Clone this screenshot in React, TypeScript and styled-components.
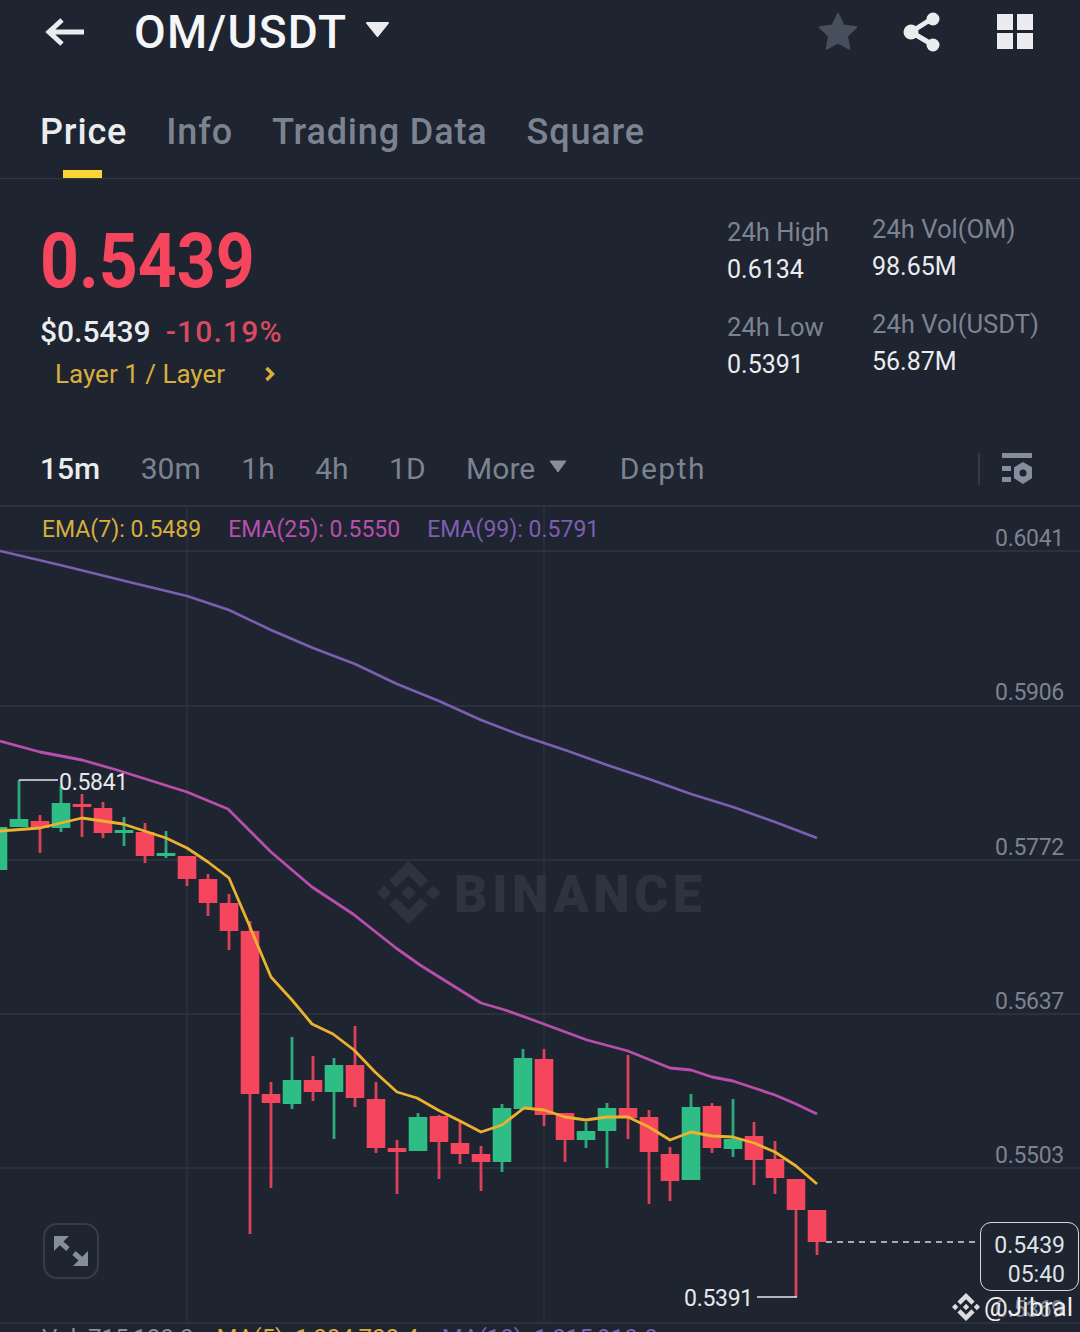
import React from 'react';
import styled, {createGlobalStyle} from "styled-components";

const GlobalStyle = createGlobalStyle`
    html, body {
        margin: 0;
        padding: 0;
        height: 1332px;
        overflow: hidden;
        background-color: #1e2430;
    }
    body {
        font-family: Roboto, "Noto Sans", sans-serif;
    }
`

type CandleType = [number, number, number, number, number, 'up' | 'down']

// x, wick top, wick bottom, body top, body bottom
const candles: Array<CandleType> = [
    [-2, 827, 870, 827, 870, 'up'],
    [19, 780, 827, 819, 827, 'up'],
    [40, 815, 853, 821, 828, 'down'],
    [61, 786, 832, 803, 828, 'up'],
    [82, 794, 837, 804, 807, 'down'],
    [103, 802, 838, 808, 833, 'down'],
    [124, 817, 846, 830, 832, 'up'],
    [145, 823, 863, 832, 856, 'down'],
    [166, 831, 858, 853, 855, 'up'],
    [187, 856, 886, 856, 879, 'down'],
    [208, 874, 916, 879, 903, 'down'],
    [229, 894, 950, 903, 931, 'down'],
    [250, 921, 1234, 931, 1094, 'down'],
    [271, 1082, 1188, 1094, 1103, 'down'],
    [292, 1037, 1109, 1080, 1104, 'up'],
    [313, 1056, 1101, 1080, 1092, 'down'],
    [334, 1058, 1139, 1065, 1092, 'up'],
    [355, 1026, 1107, 1065, 1098, 'down'],
    [376, 1082, 1153, 1099, 1148, 'down'],
    [397, 1140, 1194, 1148, 1152, 'down'],
    [418, 1113, 1151, 1117, 1151, 'up'],
    [439, 1115, 1179, 1116, 1142, 'down'],
    [460, 1122, 1164, 1143, 1154, 'down'],
    [481, 1146, 1191, 1154, 1162, 'down'],
    [502, 1104, 1172, 1108, 1162, 'up'],
    [523, 1049, 1108, 1058, 1109, 'up'],
    [544, 1049, 1126, 1059, 1115, 'down'],
    [565, 1113, 1162, 1113, 1140, 'down'],
    [586, 1122, 1148, 1131, 1140, 'up'],
    [607, 1103, 1168, 1108, 1131, 'up'],
    [628, 1055, 1139, 1108, 1118, 'down'],
    [649, 1110, 1204, 1117, 1152, 'down'],
    [670, 1147, 1201, 1154, 1181, 'down'],
    [691, 1094, 1180, 1107, 1180, 'up'],
    [712, 1103, 1153, 1106, 1148, 'down'],
    [733, 1099, 1157, 1139, 1149, 'up'],
    [754, 1122, 1185, 1136, 1160, 'down'],
    [775, 1141, 1194, 1159, 1178, 'down'],
    [796, 1179, 1297, 1179, 1210, 'down'],
    [817, 1210, 1255, 1210, 1242, 'down'],
]

const ema7 = "0,831 40,828 82,818 123,824 166,838 187,848 208,862 229,878 250,927 271,977 292,1000 312,1024 333,1034 354,1050 375,1072 397,1092 417,1098 438,1110 460,1121 481,1132 502,1125 524,1108 544,1110 565,1117 586,1120 607,1117 628,1117 649,1127 670,1140 691,1132 712,1136 733,1137 754,1143 775,1152 796,1166 817,1184"
const ema25 = "0,741 40,752 82,760 117,770 187,792 228,809 271,852 312,887 353,914 396,948 420,965 460,990 481,1003 505,1010 533,1020 587,1040 628,1051 670,1068 691,1070 712,1077 733,1081 754,1088 775,1095 796,1104 817,1114"
const ema99 = "0,551 60,565 125,581 187,596 229,610 271,630 313,648 355,664 397,684 439,701 481,720 523,736 565,750 607,765 649,779 691,794 733,807 775,822 817,838"

const gridRows = [551, 706, 860, 1014, 1168]
const axisLabels: Array<[string, number]> = [['0.6041', 546], ['0.5906', 700], ['0.5772', 855], ['0.5637', 1009], ['0.5503', 1163], ['0.5369', 1317]]

const logoPath = "M38.73 53.2l24.59-24.58 24.6 24.6 14.3-14.31L63.32 0 24.43 38.9zM0 63.31l14.3-14.31 14.31 14.31-14.31 14.3zm38.73 10.1l24.59 24.6 24.6-24.6 14.31 14.29-38.9 38.91-38.91-38.88v-.03zm59.44-10.1l14.3-14.31 14.32 14.31-14.31 14.3zM77.83 63.3L63.32 48.78 52.59 59.51l-1.24 1.23-2.54 2.54 14.51 14.5 14.51-14.47z"

const Chart = () => (
    <ChartSvg viewBox="0 507 1080 815" width="1080" height="815">
        {gridRows.map(y => <line key={y} x1="0" x2="1080" y1={y} y2={y} stroke="#2f3542" strokeWidth="1.5"/>)}
        <line x1="187" x2="187" y1="507" y2="1322" stroke="#2b313d" strokeWidth="1.5"/>
        <line x1="544" x2="544" y1="507" y2="1322" stroke="#2b313d" strokeWidth="1.5"/>

        <path d={logoPath} fill="#2d333f" transform="translate(377 861) scale(0.5)"/>
        <WatermarkText x="454" y="912">BINANCE</WatermarkText>

        {axisLabels.map(([label, y]) => <AxisText key={label} x="1064" y={y}>{label}</AxisText>)}

        <EmaLine points={ema99} stroke="#7c5fb0" strokeWidth="2.6"/>
        <EmaLine points={ema25} stroke="#b84fae" strokeWidth="2.8"/>

        {candles.map(([x, wickTop, wickBottom, bodyTop, bodyBottom, side]) => (
            <g key={x} fill={side === 'up' ? '#2ebd85' : '#f6465d'}>
                <rect x={x - 1.4} y={wickTop} width="2.8" height={wickBottom - wickTop} opacity="0.88"/>
                <rect x={x - 9.3} y={bodyTop} width="18.6" height={Math.max(bodyBottom - bodyTop, 3)}/>
            </g>
        ))}

        <EmaLine points={ema7} stroke="#ecb22e" strokeWidth="2.8"/>

        <line x1="19" x2="58" y1="780" y2="780" stroke="#e6e8ea" strokeWidth="1.4"/>
        <MarkText x="59" y="790">0.5841</MarkText>
        <line x1="757" x2="797" y1="1297" y2="1297" stroke="#e6e8ea" strokeWidth="1.4"/>
        <MarkText x="684" y="1306">0.5391</MarkText>

        <line x1="826" x2="980" y1="1242" y2="1242" stroke="#d5d8dc" strokeWidth="1.4" strokeDasharray="6 5"/>
    </ChartSvg>
)

const intervals = ['30m', '1h', '4h', '1D']

const App = () => {
    return (
        <Page>
            <GlobalStyle/>
            <Header>
                <BackIcon viewBox="0 0 42 30" width="42" height="30">
                    <path d="M39 15H5M17 3L4 15l13 12" fill="none" stroke="#eaecef" strokeWidth="5"/>
                </BackIcon>
                <Pair>OM/USDT</Pair>
                <Caret viewBox="0 0 25 17" width="25" height="17" $margin="18px">
                    <path d="M2 1h21a1 1 0 0 1 .8 1.6L13.3 15.5a1 1 0 0 1-1.6 0L1.2 2.6A1 1 0 0 1 2 1z" fill="#eaecef"/>
                </Caret>
                <HeaderIcons>
                    <svg viewBox="0 0 40 40" width="40" height="40">
                        <path d="M20 2l5.6 11.6 12.6 1.7-9.2 8.8 2.3 12.6L20 30.6 8.700 36.700l2.300-12.600-9.200-8.800 12.600-1.700z" fill="#474e5c" stroke="#474e5c" strokeWidth="2" strokeLinejoin="round"/>
                    </svg>
                    <svg viewBox="0 0 38 40" width="38" height="40">
                        <path d="M8 20L30 6M8 20L30 33" stroke="#eaecef" strokeWidth="5"/>
                        <circle cx="8" cy="20" r="7.500" fill="#eaecef"/>
                        <circle cx="30" cy="7" r="6.500" fill="#eaecef"/>
                        <circle cx="30" cy="33" r="6.500" fill="#eaecef"/>
                    </svg>
                    <GridIcon viewBox="0 0 36 36" width="36" height="36">
                        <rect x="0" y="0" width="16" height="16" fill="#eaecef"/>
                        <rect x="20" y="0" width="16" height="16" fill="#eaecef"/>
                        <rect x="0" y="19" width="16" height="16" fill="#eaecef"/>
                        <rect x="20" y="19" width="16" height="16" fill="#eaecef"/>
                    </GridIcon>
                </HeaderIcons>
            </Header>

            <Tabs>
                <Tab $active>Price</Tab>
                <Tab>Info</Tab>
                <Tab>Trading Data</Tab>
                <Tab>Square</Tab>
            </Tabs>

            <Summary>
                <PriceColumn>
                    <BigPrice>0.5439</BigPrice>
                    <PriceRow>
                        <UsdPrice>$0.5439</UsdPrice>
                        <Change>-10.19%</Change>
                    </PriceRow>
                    <Category>
                        Layer 1 / Layer
                        <svg viewBox="0 0 12 16" width="12" height="16">
                            <path d="M2.500 2l6 6-6 6" fill="none" stroke="#d9ae3c" strokeWidth="3.500"/>
                        </svg>
                    </Category>
                </PriceColumn>
                <StatColumn $width={145} $top={35}>
                    <Stat><StatLabel>24h High</StatLabel><StatValue>0.6134</StatValue></Stat>
                    <Stat><StatLabel>24h Low</StatLabel><StatValue>0.5391</StatValue></Stat>
                </StatColumn>
                <StatColumn $width={208} $top={32}>
                    <Stat><StatLabel>24h Vol(OM)</StatLabel><StatValue>98.65M</StatValue></Stat>
                    <Stat><StatLabel>24h Vol(USDT)</StatLabel><StatValue>56.87M</StatValue></Stat>
                </StatColumn>
            </Summary>

            <IntervalBar>
                <Interval $active>15m</Interval>
                {intervals.map(item => <Interval key={item}>{item}</Interval>)}
                <Interval>
                    More
                    <Caret viewBox="0 0 18 13" width="18" height="13" $margin="14px">
                        <path d="M1 1h16l-8 11z" fill="#848e9c" stroke="#848e9c" strokeLinejoin="round"/>
                    </Caret>
                </Interval>
                <DepthTab>Depth</DepthTab>
                <BarTools>
                    <BarDivider/>
                    <svg viewBox="0 0 31 32" width="31" height="32">
                        <rect x="0" y="0" width="30" height="5" fill="#848e9c"/>
                        <rect x="0" y="13" width="9" height="5" fill="#848e9c"/>
                        <rect x="0" y="24" width="9" height="5" fill="#848e9c"/>
                        <path d="M21 9l9 5.200v11L21 31l-9-5.800v-11z" fill="#848e9c"/>
                        <circle cx="21" cy="20" r="3.500" fill="#1e2430"/>
                    </svg>
                </BarTools>
            </IntervalBar>

            <ChartArea>
                <Chart/>
                <Legend>
                    <LegendItem $color="#d9ae3c">EMA(7): 0.5489</LegendItem>
                    <LegendItem $color="#b84fae">EMA(25): 0.5550</LegendItem>
                    <LegendItem $color="#7c5fb0">EMA(99): 0.5791</LegendItem>
                </Legend>
                <ExpandButton>
                    <svg viewBox="0 0 52 52" width="52" height="52">
                        <path d="M9 11h15L9 26z" fill="#848e9c"/>
                        <path d="M15 17l8 7" stroke="#848e9c" strokeWidth="5"/>
                        <path d="M43 41H28l15-15z" fill="#848e9c"/>
                        <path d="M37 35l-8-7" stroke="#848e9c" strokeWidth="5"/>
                    </svg>
                </ExpandButton>
                <PriceTag>
                    <span>0.5439</span>
                    <span>05:40</span>
                </PriceTag>
                <Credit>
                    <svg viewBox="0 0 126.61 126.61" width="28" height="28">
                        <path d={logoPath} fill="#dcdcdc"/>
                    </svg>
                    <CreditName>@Jibral</CreditName>
                </Credit>
            </ChartArea>

            <VolumeRow>
                <LegendItem $color="#848e9c">Vol: 715,100.0</LegendItem>
                <LegendItem $color="#d9ae3c">MA(5): 1,004,700.4</LegendItem>
                <LegendItem $color="#7c5fb0">MA(10): 1,015,910.0</LegendItem>
            </VolumeRow>
        </Page>
    );
};

export default App;

const Page = styled.div`
    width: 1080px;
    height: 1332px;
    overflow: hidden;
    background-color: #1e2430;
    color: #eaecef;
`

const Header = styled.header`
    display: flex;
    align-items: center;
    height: 64px;
    padding: 0 47px 0 45px;
`

const BackIcon = styled.svg`
    flex: none;
`

const Pair = styled.h1`
    margin: 0 0 0 47px;
    font-size: 46px;
    font-weight: 500;
    letter-spacing: 1.2px;
    line-height: 64px;
    color: #f5f6f7;
`

const Caret = styled.svg<{ $margin: string }>`
    flex: none;
    margin-left: ${props => props.$margin};
    align-self: center;
    position: relative;
    top: -3px;
`

const HeaderIcons = styled.div`
    display: flex;
    align-items: center;
    gap: 45px;
    margin-left: auto;
`

const GridIcon = styled.svg`
    margin-left: 11px;
`

const Tabs = styled.nav`
    display: flex;
    align-items: center;
    gap: 39px;
    height: 92px;
    padding: 22px 0 0 40px;
    border-bottom: 1px solid #333945;
`

const Tab = styled.div<{ $active?: boolean }>`
    position: relative;
    font-size: 36px;
    font-weight: 500;
    line-height: 48px;
    letter-spacing: 0.85px;
    color: ${props => props.$active ? '#eaecef' : '#7c8390'};
    
    &::after {
        content: '';
        display: ${props => props.$active ? 'block' : 'none'};
        position: absolute;
        left: 23px;
        bottom: -22px;
        width: 39px;
        height: 8px;
        background-color: #fcd535;
    }
`

const Summary = styled.section`
    display: flex;
    height: 258px;
`

const PriceColumn = styled.div`
    width: 727px;
    padding: 50px 0 0 40px;
    box-sizing: border-box;
`

const BigPrice = styled.div`
    font-size: 76px;
    font-weight: 700;
    line-height: 64px;
    color: #f6465d;
    transform: scaleX(0.895);
    transform-origin: left center;
`

const PriceRow = styled.div`
    display: flex;
    gap: 15px;
    margin-top: 19px;
    font-size: 30px;
    line-height: 40px;
`

const UsdPrice = styled.span`
    font-weight: 500;
    color: #eaecef;
`

const Change = styled.span`
    font-weight: 500;
    color: #d9495f;
    letter-spacing: 1.2px;
`

const Category = styled.div`
    display: flex;
    align-items: center;
    gap: 39px;
    margin: 4px 0 0 15px;
    font-size: 26px;
    line-height: 36px;
    color: #d9ae3c;
`

const StatColumn = styled.div<{ $width: number, $top: number }>`
    flex: none;
    width: ${props => props.$width}px;
    padding-top: ${props => props.$top}px;
`

const Stat = styled.div`
    display: flex;
    flex-direction: column;
    gap: 1px;
    margin-bottom: 22px;
`

const StatLabel = styled.span`
    font-size: 25.6px;
    line-height: 36px;
    color: #7c8390;
`

const StatValue = styled.span`
    position: relative;
    top: 1px;
    font-size: 25px;
    line-height: 36px;
    color: #eaecef;
`

const IntervalBar = styled.div`
    display: flex;
    align-items: center;
    gap: 40.5px;
    height: 64px;
    padding: 0 47px 4px 40px;
    border-bottom: 2px solid #2b313d;
`

const Interval = styled.div<{ $active?: boolean }>`
    display: flex;
    align-items: center;
    font-size: 30px;
    font-weight: ${props => props.$active ? 500 : 400};
    line-height: 40px;
    color: ${props => props.$active ? '#eaecef' : '#7c8390'};
`

const DepthTab = styled(Interval)`
    margin-left: 12px;
    letter-spacing: 1.5px;
`

const BarTools = styled.div`
    display: flex;
    align-items: center;
    gap: 22px;
    margin-left: auto;
`

const BarDivider = styled.div`
    width: 2px;
    height: 32px;
    background-color: #333945;
`

const ChartArea = styled.div`
    position: relative;
    height: 815px;
    border-bottom: 2px solid #2b313d;
`

const ChartSvg = styled.svg`
    display: block;
`

const EmaLine = styled.polyline`
    fill: none;
    stroke-linejoin: round;
`

const WatermarkText = styled.text`
    font-family: Roboto, sans-serif;
    font-size: 52px;
    font-weight: 900;
    letter-spacing: 4.4px;
    fill: #2d333f;
`

const AxisText = styled.text`
    font-family: Roboto, sans-serif;
    font-size: 23px;
    letter-spacing: -0.3px;
    text-anchor: end;
    fill: #7c8390;
`

const MarkText = styled.text`
    font-family: Roboto, sans-serif;
    font-size: 23px;
    letter-spacing: -0.3px;
    fill: #e6e8ea;
`

const Legend = styled.div`
    position: absolute;
    top: 7px;
    left: 42px;
    display: flex;
    gap: 27px;
`

const LegendItem = styled.span<{ $color: string }>`
    font-size: 23px;
    line-height: 32px;
    color: ${props => props.$color};
    white-space: nowrap;
`

const ExpandButton = styled.div`
    position: absolute;
    left: 43px;
    top: 716px;
    width: 52px;
    height: 52px;
    border: 2.5px solid #363c48;
    border-radius: 14px;
`

const PriceTag = styled.div`
    position: absolute;
    left: 980px;
    top: 715px;
    display: flex;
    flex-direction: column;
    align-items: flex-end;
    box-sizing: border-box;
    width: 99px;
    height: 69px;
    padding: 8px 13px 0 0;
    border: 1.5px solid #d5d8dc;
    border-radius: 11px;
    font-size: 23px;
    line-height: 29px;
    color: #dfe2e6;
    background-color: #1e2430;
`

const Credit = styled.div`
    position: absolute;
    left: 952px;
    top: 786px;
    display: flex;
    align-items: center;
    gap: 4px;
`

const CreditName = styled.span`
    font-size: 26px;
    line-height: 28px;
    letter-spacing: 0.3px;
    color: #eeeeee;
`

const VolumeRow = styled.div`
    display: flex;
    gap: 23px;
    padding: 1px 0 0 42px;

    ${LegendItem} {
        font-size: 24px;
        line-height: 26px;
    }
`
